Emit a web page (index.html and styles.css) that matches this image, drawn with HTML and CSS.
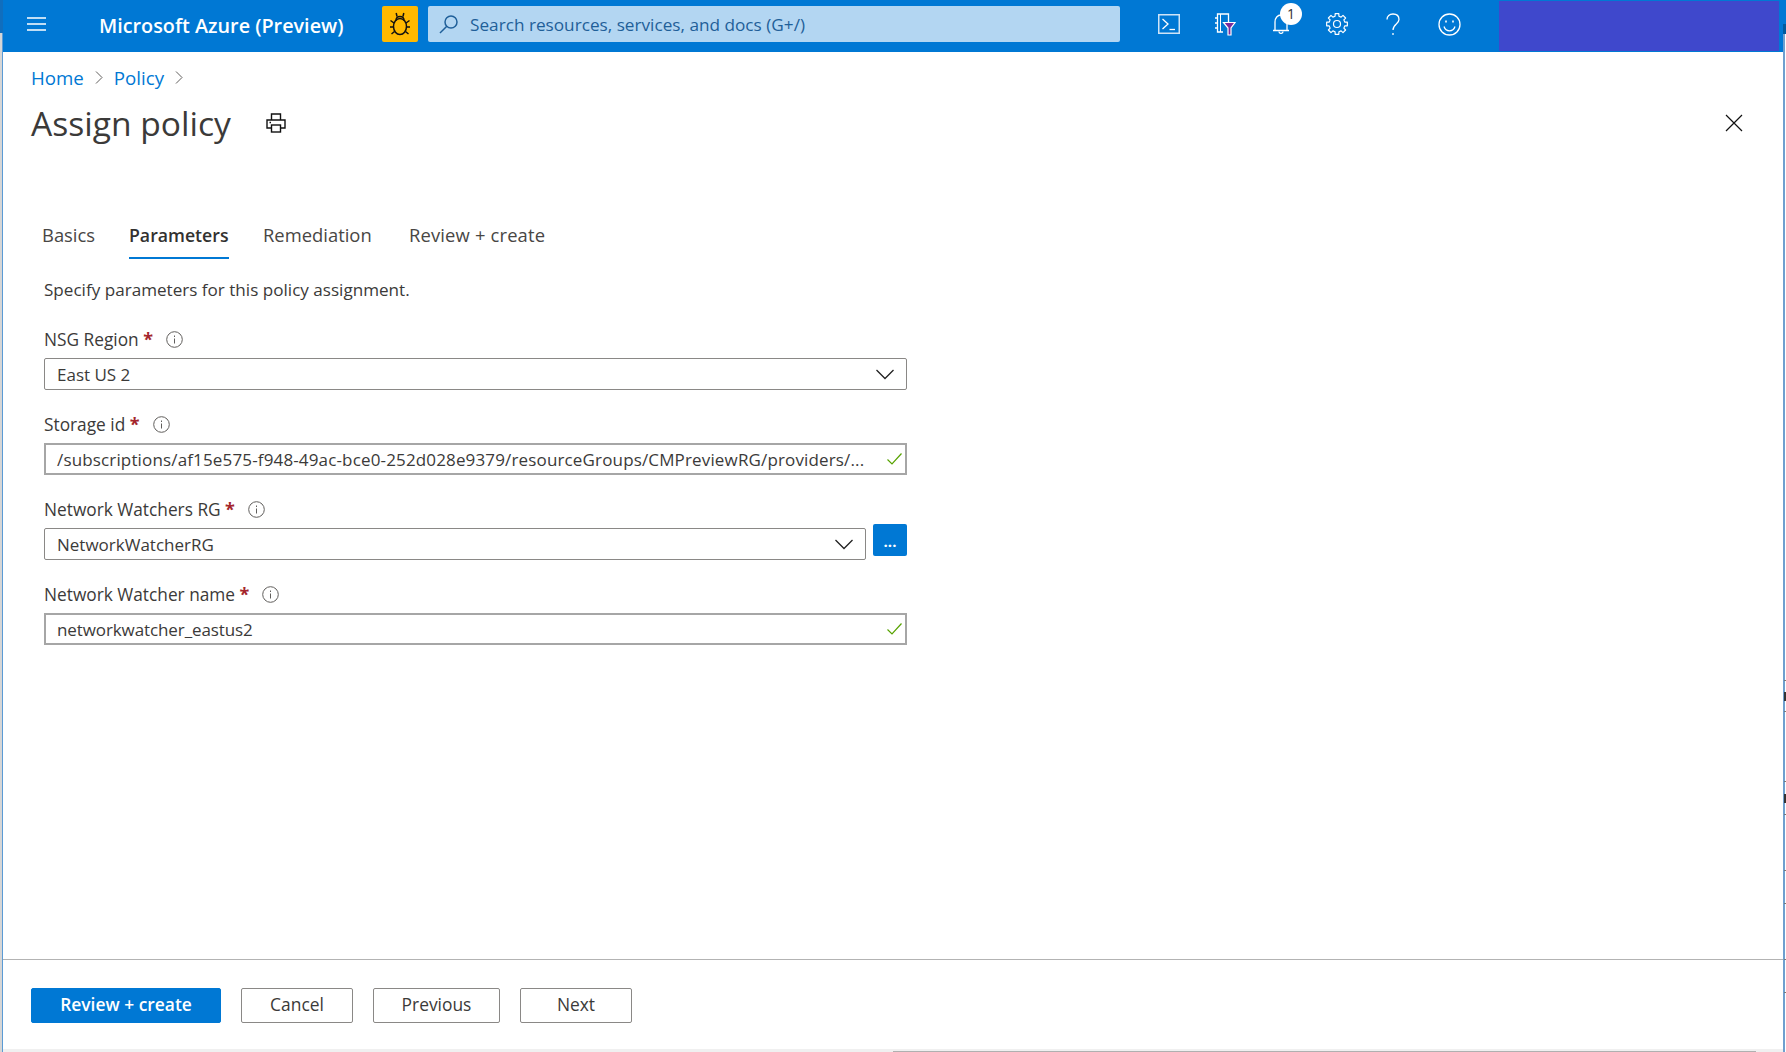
FILE: index.html
```html
<!DOCTYPE html>
<html>

<head>
    <meta charset="UTF-8">
    <title>Assign policy - Microsoft Azure</title>
    <link rel="stylesheet" href="styles.css">
</head>

<body>
    <div class="window">
        <div class="edge-left">
            <div class="edge-left-top"></div>
        </div>

        <div class="page">
            <!-- top bar -->
            <header class="topbar">
                <svg class="menu-icon" width="19" height="14" viewBox="0 0 19 14">
                    <path d="M0 1H19M0 7H19M0 13H19" stroke="#fff" stroke-width="1.4" />
                </svg>
                <div class="brand">Microsoft Azure (Preview)</div>
                <div class="bug-btn">
                    <svg width="24" height="24" viewBox="0 0 24 24" fill="none" stroke="#111" stroke-width="1.5">
                        <ellipse cx="12" cy="14.5" rx="6.5" ry="8" />
                        <path d="M8 8.5C8 5.5 9.5 4.5 12 4.5S16 5.5 16 8.5" />
                        <path d="M9 4.5L8.2 1M15 4.5L15.8 1M6 11L2.5 8.5M18 11L21.5 8.5M5.5 15H2M18.5 15H22M6.5 19.5L3.5 22M17.5 19.5L20.5 22" />
                    </svg>
                </div>
                <div class="search">
                    <svg class="search-icon" width="19" height="19" viewBox="0 0 19 19" fill="none" stroke="#1f5f99" stroke-width="1.5">
                        <circle cx="12" cy="7" r="6" />
                        <path d="M7.8 11.2L1 18" />
                    </svg>
                    <span>Search resources, services, and docs (G+/)</span>
                </div>
                <div class="top-icons">
                    <div class="top-icon">
                        <svg width="22" height="20" viewBox="0 0 22 20" fill="none">
                            <rect x="0.75" y="0.75" width="20.5" height="18.5" stroke="#cfe4f7" stroke-width="1.5" />
                            <path d="M4.5 5L10 10L4.5 15" stroke="#fff" stroke-width="1.3" />
                            <path d="M11.5 15.5H17" stroke="#fff" stroke-width="1.3" />
                        </svg>
                    </div>
                    <div class="top-icon">
                        <svg width="22" height="23" viewBox="0 0 22 23" fill="none">
                            <path d="M9 19H3.5V1H14.5V9" stroke="#fff" stroke-width="1.3" />
                            <path d="M6.5 1V19" stroke="#fff" stroke-width="1" />
                            <path d="M1 5H4M1 10H4M1 15H4" stroke="#fff" stroke-width="1.5" />
                            <path d="M9.5 9.5H21L17 15V22H14V15Z" fill="#7a2b9c" stroke="#fff" stroke-width="1.2" />
                        </svg>
                    </div>
                    <div class="top-icon">
                        <svg class="bell" width="18" height="20" viewBox="0 0 18 20" fill="none" stroke="#fff" stroke-width="1.3">
                            <path d="M1 16.5H17M3 16.5V8C3 4 5.5 1 9 1S15 4 15 8V16.5" />
                            <path d="M7 17.5C7 20 11 20 11 17.5" />
                        </svg>
                        <span class="badge">1</span>
                    </div>
                    <div class="top-icon">
                        <svg width="22" height="22" viewBox="0 0 22 22" fill="none" stroke="#fff" stroke-width="1.2" stroke-linejoin="round">
                            <polygon points="18.76,9.06 21.34,9.18 21.34,12.82 18.76,12.94 17.86,15.12 19.6,17.02 17.02,19.6 15.12,17.86 12.94,18.76 12.82,21.34 9.18,21.34 9.06,18.76 6.88,17.86 4.98,19.6 2.4,17.02 4.14,15.12 3.24,12.94 0.66,12.82 0.66,9.18 3.24,9.06 4.14,6.88 2.4,4.98 4.98,2.4 6.88,4.14 9.06,3.24 9.18,0.66 12.82,0.66 12.94,3.24 15.12,4.14 17.02,2.4 19.6,4.98 17.86,6.88" />
                            <circle cx="11" cy="11" r="3.5" />
                        </svg>
                    </div>
                    <div class="top-icon">
                        <svg width="14" height="23" viewBox="0 0 14 23" fill="none" stroke="#fff" stroke-width="1.3">
                            <path d="M1 6.5C1 3 3.5 1 7 1S13 3 13 6.5C13 11 7 11 7 17" />
                            <path d="M7 20V22" />
                        </svg>
                    </div>
                    <div class="top-icon">
                        <svg width="23" height="23" viewBox="0 0 23 23" fill="none" stroke="#fff" stroke-width="1.3">
                            <circle cx="11.5" cy="11.5" r="10.5" />
                            <path d="M6 13.5C7 16.5 9 17.8 11.5 17.8S16 16.5 17 13.5" />
                            <path d="M8 7.5V9.5M15 7.5V9.5" stroke-width="1.6" />
                        </svg>
                    </div>
                </div>
                <div class="account"></div>
            </header>

            <main class="content">
                <nav class="crumbs">
                    <a>Home</a>
                    <svg width="8" height="13" viewBox="0 0 8 13" fill="none" stroke="#605e5c"><path d="M1 0.5L7 6.5L1 12.5" /></svg>
                    <a>Policy</a>
                    <svg width="8" height="13" viewBox="0 0 8 13" fill="none" stroke="#605e5c"><path d="M1 0.5L7 6.5L1 12.5" /></svg>
                </nav>

                <div class="title-row">
                    <h1>Assign policy</h1>
                    <svg class="print-icon" width="20" height="20" viewBox="0 0 20 20" fill="none" stroke="#111" stroke-width="1.4">
                        <path d="M5.5 7V1H14.5V7" />
                        <path d="M5 15H1V7H19V15H15" />
                        <rect x="5.5" y="12" width="9" height="7" />
                        <path d="M3.5 9.5H5" />
                    </svg>
                    <svg class="close-icon" width="18" height="18" viewBox="0 0 18 18" stroke="#111" stroke-width="1.2"><path d="M1 1L17 17M17 1L1 17" /></svg>
                </div>

                <div class="tabs">
                    <div class="tab tab-basics">Basics</div>
                    <div class="tab tab-params active">Parameters</div>
                    <div class="tab tab-remed">Remediation</div>
                    <div class="tab tab-review">Review + create</div>
                </div>

                <form class="form">
                    <p class="intro">Specify parameters for this policy assignment.</p>

                    <div class="field">
                        <label>NSG Region <b>*</b>
                            <svg class="info" width="17" height="17" viewBox="0 0 17 17" fill="none" stroke="#605e5c"><circle cx="8.5" cy="8.5" r="7.8" /><path d="M8.5 7.5V12.5M8.5 4.5V6" /></svg>
                        </label>
                        <div class="control select">
                            <span>East US 2</span>
                            <svg width="18" height="11" viewBox="0 0 18 11" fill="none" stroke="#222" stroke-width="1.3"><path d="M0.5 1L9 9.5L17.5 1" /></svg>
                        </div>
                    </div>

                    <div class="field">
                        <label>Storage id <b>*</b>
                            <svg class="info" width="17" height="17" viewBox="0 0 17 17" fill="none" stroke="#605e5c"><circle cx="8.5" cy="8.5" r="7.8" /><path d="M8.5 7.5V12.5M8.5 4.5V6" /></svg>
                        </label>
                        <div class="control input">
                            <span class="long-value">/subscriptions/af15e575-f948-49ac-bce0-252d028e9379/resourceGroups/CMPreviewRG/providers/...</span>
                            <svg width="15" height="12" viewBox="0 0 15 12" fill="none" stroke="#57a300" stroke-width="1.2"><path d="M0.5 6.5L5 11L14.5 0.5" /></svg>
                        </div>
                    </div>

                    <div class="field">
                        <label>Network Watchers RG <b>*</b>
                            <svg class="info" width="17" height="17" viewBox="0 0 17 17" fill="none" stroke="#605e5c"><circle cx="8.5" cy="8.5" r="7.8" /><path d="M8.5 7.5V12.5M8.5 4.5V6" /></svg>
                        </label>
                        <div class="select-row">
                            <div class="control select">
                                <span>NetworkWatcherRG</span>
                                <svg width="18" height="11" viewBox="0 0 18 11" fill="none" stroke="#222" stroke-width="1.3"><path d="M0.5 1L9 9.5L17.5 1" /></svg>
                            </div>
                            <div class="more-btn">...</div>
                        </div>
                    </div>

                    <div class="field">
                        <label>Network Watcher name <b>*</b>
                            <svg class="info" width="17" height="17" viewBox="0 0 17 17" fill="none" stroke="#605e5c"><circle cx="8.5" cy="8.5" r="7.8" /><path d="M8.5 7.5V12.5M8.5 4.5V6" /></svg>
                        </label>
                        <div class="control input">
                            <span class="short-value">networkwatcher_eastus2</span>
                            <svg width="15" height="12" viewBox="0 0 15 12" fill="none" stroke="#57a300" stroke-width="1.2"><path d="M0.5 6.5L5 11L14.5 0.5" /></svg>
                        </div>
                    </div>
                </form>
            </main>

            <footer class="footer">
                <button class="btn primary w-review">Review + create</button>
                <button class="btn w-cancel">Cancel</button>
                <button class="btn w-prev">Previous</button>
                <button class="btn w-next">Next</button>
            </footer>
            <div class="scrollstrip"><div class="scrollthumb"></div></div>
        </div>

        <div class="edge-right">
            <div class="edge-right-top"></div>
            <div class="edge-right-dark"></div>
            <i class="tick t1"></i><i class="tick t2"></i><i class="tick t3"></i><i class="tick t4"></i>
            <i class="tick t5"></i><i class="tick t6"></i><i class="tick t7"></i><i class="tick t8"></i>
            <i class="grip g1"></i><i class="grip g2"></i>
        </div>
    </div>
</body>

</html>
```

FILE: styles.css
```css
body {
    margin: 0;
    font-family: "Open Sans", "Noto Sans", sans-serif;
    color: #3b3a39;
    background-color: #fff;
}

.window {
    display: flex;
    height: 1052px;
    overflow: hidden;
}

/* window edges */

.edge-left {
    width: 3px;
    background: linear-gradient(to right, #d6d6d6 2px, #5b9bd5 2px);
}

.edge-left-top {
    height: 33px;
    background-color: #106ebe;
}

.edge-right {
    position: relative;
    width: 3px;
    background: linear-gradient(to right, #6f9fcf 2px, #ffffff 2px);
}

.edge-right-top {
    height: 24px;
    background-color: #0078d4;
}

.edge-right-dark {
    height: 10px;
    background-color: #005a9e;
}

.tick {
    position: absolute;
    right: 0;
    width: 2px;
    height: 1px;
    background-color: #777;
}

.t1 { top: 680px; }
.t2 { top: 711px; }
.t3 { top: 781px; }
.t4 { top: 814px; }
.t5 { top: 870px; }
.t6 { top: 903px; }
.t7 { top: 959px; }
.t8 { top: 992px; }

.grip {
    position: absolute;
    right: 0;
    width: 2px;
    height: 9px;
    background-color: #333;
}

.g1 { top: 692px; }
.g2 { top: 794px; }

.page {
    flex: 1;
    display: flex;
    flex-direction: column;
    min-width: 0;
}

/* top bar */

.topbar {
    display: flex;
    align-items: center;
    flex-shrink: 0;
    box-sizing: border-box;
    height: 52px;
    padding-bottom: 4px;
    background-color: #0078d4;
}

.menu-icon {
    margin-left: 24px;
    margin-right: 53px;
    flex-shrink: 0;
}

.brand {
    width: 283px;
    padding-top: 2px;
    color: #fff;
    font-size: 19.8px;
    font-weight: 600;
    white-space: nowrap;
}

.bug-btn {
    display: flex;
    align-items: center;
    justify-content: center;
    width: 36px;
    height: 36px;
    border-radius: 2px;
    background-color: #ffb900;
}

.search {
    display: flex;
    align-items: center;
    box-sizing: border-box;
    width: 692px;
    height: 36px;
    margin-left: 10px;
    padding-left: 11px;
    border-radius: 2px;
    background-color: #b3d6f2;
    color: #1f5f99;
    font-size: 17.2px;
}

.search-icon {
    margin-right: 12px;
}

.top-icons {
    display: flex;
    margin-left: 21px;
}

.top-icon {
    position: relative;
    display: flex;
    align-items: center;
    justify-content: center;
    width: 56px;
    height: 36px;
}

.badge {
    position: absolute;
    left: 27px;
    top: -3px;
    width: 22px;
    height: 22px;
    border-radius: 50%;
    background-color: #fff;
    color: #323130;
    font-size: 14px;
    line-height: 22px;
    text-align: center;
}

.account {
    align-self: flex-start;
    width: 280px;
    height: 50px;
    margin-top: 1px;
    margin-left: 22px;
    background-color: #3f48cc;
}

/* main area */

.content {
    flex: 1;
    padding-left: 28px;
    padding-right: 40px;
}

.crumbs {
    display: flex;
    align-items: center;
    gap: 11px;
    margin-top: 15px;
    height: 20px;
    font-size: 18.7px;
    color: #0078d4;
}

.title-row {
    display: flex;
    align-items: center;
    height: 40px;
    margin-top: 16px;
}

.title-row h1 {
    margin: 0;
    font-size: 33.6px;
    font-weight: 500;
    white-space: nowrap;
}

.print-icon {
    margin-left: 35px;
}

.close-icon {
    margin-left: auto;
}

.tabs {
    display: flex;
    margin-top: 80px;
    margin-left: 11px;
}

.tab {
    box-sizing: content-box;
    height: 24px;
    padding-bottom: 10px;
    border-bottom: 2px solid transparent;
    font-size: 18.4px;
    line-height: 24px;
    color: #484644;
    white-space: nowrap;
}

.tab-basics { width: 87px; }
.tab-params { width: 100px; margin-right: 34px; }
.tab-remed { width: 146px; }
.tab-review { letter-spacing: 0.15px; }

.tab.active {
    border-bottom-color: #0078d4;
    font-size: 17.7px;
    font-weight: 600;
    color: #323130;
}

.form {
    width: 863px;
    margin-left: 13px;
}

.intro {
    margin: 21px 0 29px;
    font-size: 17.1px;
    line-height: 20px;
}

.field {
    margin-bottom: 24px;
}

.field label {
    display: flex;
    align-items: center;
    height: 20px;
    margin-bottom: 9px;
    font-size: 17.3px;
    white-space: pre;
}

.field label b {
    color: #a4262c;
    font-size: 18px;
}

.info {
    margin-left: 13px;
}

.control {
    display: flex;
    align-items: center;
    justify-content: space-between;
    box-sizing: border-box;
    height: 32px;
    padding-left: 12px;
    font-size: 17px;
    white-space: nowrap;
    background-color: #fff;
}

.select {
    flex: 1;
    padding-right: 12px;
    border: 1px solid #8a8886;
    border-radius: 2px;
}

.input {
    padding-right: 3px;
    border: 2px solid #a6a6a6;
    padding-left: 11px;
}

.long-value {
    letter-spacing: 0.15px;
}

.short-value {
    letter-spacing: -0.1px;
}

.select-row {
    display: flex;
    align-items: flex-start;
    gap: 7px;
}

.more-btn {
    width: 34px;
    height: 32px;
    margin-top: -4px;
    border-radius: 2px;
    background-color: #0078d4;
    color: #fff;
    font-size: 15px;
    font-weight: 700;
    line-height: 34px;
    text-align: center;
}

/* bottom buttons */

.footer {
    display: flex;
    gap: 20px;
    box-sizing: border-box;
    height: 90px;
    padding: 28px 0 0 28px;
    border-top: 1px solid #b3b3b3;
}

.btn {
    height: 35px;
    padding: 0 0 3px;
    border: 1px solid #8a8886;
    border-radius: 2px;
    background-color: #fff;
    color: #3b3a39;
    font-family: "Open Sans", "Noto Sans", sans-serif;
    font-size: 17.4px;
}

.btn.primary {
    border-color: #0078d4;
    background-color: #0078d4;
    color: #fff;
    font-weight: 600;
}

.w-review { width: 190px; }
.w-cancel { width: 112px; }
.w-prev { width: 127px; }
.w-next { width: 112px; }

.scrollstrip {
    display: flex;
    flex-direction: column;
    justify-content: flex-end;
    height: 3px;
    background-color: #f0f0f0;
}

.scrollthumb {
    width: 863px;
    height: 1px;
    margin-left: 890px;
    background-color: #b0b0b0;
}
```
